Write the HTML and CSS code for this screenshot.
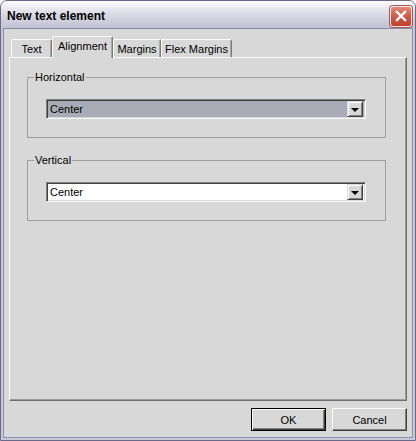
FILE: index.html
```html
<!DOCTYPE html>
<html>
<head>
<meta charset="utf-8">
<link rel="stylesheet" href="styles.css">
</head>
<body>
<div class="window">
  <div class="titlebar">
    <span class="title">New text element</span>
    <button class="close" aria-label="Close">
      <svg width="12" height="12" viewBox="0 0 12 12"><path d="M2 2 L10 10 M10 2 L2 10" stroke="#fff" stroke-width="2.4" stroke-linecap="square"/></svg>
    </button>
  </div>
  <div class="client">
    <div class="tabs">
      <div class="tab tab-text">Text</div>
      <div class="tab tab-align active">Alignment</div>
      <div class="tab tab-margins">Margins</div>
      <div class="tab tab-flex">Flex Margins</div>
    </div>
    <div class="panel">
      <fieldset class="group">
        <legend>Horizontal</legend>
        <div class="group-body">
          <div class="combo combo-selected">
            <span class="combo-value">Center</span>
            <span class="combo-btn"><span class="arrow"></span></span>
          </div>
        </div>
      </fieldset>
      <fieldset class="group group-second">
        <legend>Vertical</legend>
        <div class="group-body">
          <div class="combo">
            <span class="combo-value">Center</span>
            <span class="combo-btn"><span class="arrow"></span></span>
          </div>
        </div>
      </fieldset>
    </div>
    <div class="buttons">
      <button class="btn btn-default">OK</button>
      <button class="btn">Cancel</button>
    </div>
  </div>
</div>
</body>
</html>
```
FILE: styles.css
```css
* { box-sizing: border-box; }
html, body { margin: 0; padding: 0; background: #fff; }
body { font-family: "Liberation Sans", Arial, sans-serif; font-size: 11px; color: #000; }

.window {
  width: 416px;
  height: 441px;
  border: 1px solid #6a6988;
  border-radius: 7px 7px 0 0;
  background: #c8c7d9;
  display: flex;
  flex-direction: column;
  overflow: hidden;
}

.titlebar {
  height: 27px;
  flex: none;
  display: flex;
  align-items: center;
  justify-content: space-between;
  padding: 0 3px 0 6px;
  background: linear-gradient(#fdfdfe 0%, #eeeef3 20%, #d9d9e4 50%, #cbcbda 80%, #c2c1d3 100%);
}

.title {
  font-weight: bold;
  font-size: 12px;
  color: #000;
  padding-top: 2px;
}

.close {
  width: 22px;
  height: 21px;
  margin-top: 3px;
  padding: 0;
  border: 1px solid #f3e6e4;
  border-radius: 3px;
  background: linear-gradient(#e48a7c 0%, #d05c4b 45%, #bf4031 100%);
  box-shadow: 0 0 0 1px #a3575a;
  display: flex;
  align-items: center;
  justify-content: center;
}

.client {
  flex: 1;
  margin: 0 2px 2px 2px;
  border: 1px solid #8f8ea9;
  background: #d8d8d8;
  display: flex;
  flex-direction: column;
}

.tabs {
  display: flex;
  align-items: flex-end;
  height: 28px;
  padding: 7px 0 0 7px;
  flex: none;
  position: relative;
  z-index: 1;
}

.tab {
  height: 18px;
  text-align: center;
  line-height: 16px;
  background: #d8d8d8;
  border-top: 1px solid #fbfbf6;
  border-left: 1px solid #fbfbf6;
  border-right: 1px solid #7a7a7a;
  border-radius: 2px 2px 0 0;
  box-shadow: inset -1px 0 0 #a8a8a8;
  padding-top: 1px;
}
.tab-text { width: 41px; }
.tab-align { width: 61px; }
.tab-margins { width: 48px; }
.tab-flex { width: 71px; }

.tab.active {
  height: 22px;
  margin-bottom: -1px;
  padding-top: 0;
  line-height: 18px;
}

.panel {
  flex: 1;
  margin: 0 5px 0 5px;
  border-top: 1px solid #fbfbf6;
  border-left: 1px solid #fbfbf6;
  border-right: 1px solid #6e6e6e;
  border-bottom: 1px solid #6e6e6e;
  box-shadow: inset -1px -1px 0 #9b9b9b;
  padding: 13px 20px 0 17px;
}

.group {
  margin: 0;
  padding: 0;
  border: 1px solid #9e9e9e;
  min-width: 0;
}
.group-second { margin-top: 16px; }

.group legend {
  margin-left: 6px;
  padding: 0 1px;
  line-height: 13px;
  font-size: 11px;
}

.group-body {
  padding: 15px 19px 18px 18px;
}

.combo {
  width: 320px;
  height: 20px;
  display: flex;
  align-items: center;
  background: #fff;
  border-top: 1px solid #7f7f7f;
  border-left: 1px solid #7f7f7f;
  border-right: 1px solid #fbfbf6;
  border-bottom: 1px solid #fbfbf6;
  box-shadow: inset 1px 1px 0 #404040, inset -1px -1px 0 #d8d8d8;
  padding: 2px;
}
.combo-selected { background: #a9abb6; }

.combo-value {
  flex: 1;
  padding-left: 1px;
  line-height: 14px;
}

.combo-btn {
  width: 16px;
  height: 16px;
  flex: none;
  background: #d8d8d8;
  border-top: 1px solid #d8d8d8;
  border-left: 1px solid #d8d8d8;
  border-right: 1px solid #404040;
  border-bottom: 1px solid #404040;
  box-shadow: inset 1px 1px 0 #fff, inset -1px -1px 0 #808080;
  display: flex;
  align-items: center;
  justify-content: center;
}

.arrow {
  width: 0;
  height: 0;
  border-left: 4px solid transparent;
  border-right: 4px solid transparent;
  border-top: 4px solid #000;
  margin-top: 1px;
}

.buttons {
  flex: none;
  display: flex;
  justify-content: flex-end;
  gap: 6px;
  padding: 7px 5px 6px 0;
}

.btn {
  width: 75px;
  height: 23px;
  font-family: "Liberation Sans", Arial, sans-serif;
  font-size: 11px;
  color: #000;
  background: #d8d8d8;
  padding: 0;
  border-top: 1px solid #fbfbf6;
  border-left: 1px solid #fbfbf6;
  border-right: 1px solid #404040;
  border-bottom: 1px solid #404040;
  box-shadow: inset -1px -1px 0 #808080;
}
.btn-default {
  border: 1px solid #000;
  box-shadow: inset 1px 1px 0 #fbfbf6, inset -1px -1px 0 #404040, inset -2px -2px 0 #808080;
}
```
